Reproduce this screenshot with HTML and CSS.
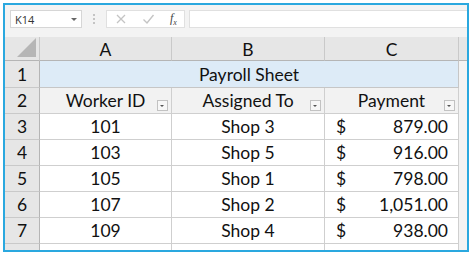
FILE: index.html
```html
<!DOCTYPE html>
<html>
<head>
<meta charset="utf-8">
<link rel="stylesheet" href="styles.css">
</head>
<body>
<div class="frame">
  <div class="fbar">
    <div class="namebox"><span>K14</span><span class="nb-arrow"></span></div>
    <div class="dots"><i></i><i></i><i></i></div>
    <div class="btns">
      <svg class="ico" width="12" height="12" viewBox="0 0 12 12"><path d="M2 2 L10 10 M10 2 L2 10" stroke="#c4c4c4" stroke-width="1.3" fill="none"/></svg>
      <svg class="ico" width="13" height="12" viewBox="0 0 13 12"><path d="M1.5 6.5 L5 10 L11.5 2" stroke="#c4c4c4" stroke-width="1.4" fill="none"/></svg>
      <span class="fx">f<sub>x</sub></span>
    </div>
    <div class="finput"></div>
  </div>
  <div class="sheet">
    <div class="corner"><span class="tri"></span></div>
    <div class="ch">A</div>
    <div class="ch">B</div>
    <div class="ch">C</div>
    <div class="ch end"></div>

    <div class="rh">1</div>
    <div class="title">Payroll Sheet</div>
    <div class="gap"></div>

    <div class="rh">2</div>
    <div class="c hdr">Worker ID<span class="flt"></span></div>
    <div class="c hdr">Assigned To<span class="flt"></span></div>
    <div class="c hdr">Payment<span class="flt"></span></div>
    <div class="gap"></div>

    <div class="rh">3</div>
    <div class="c">101</div>
    <div class="c">Shop 3</div>
    <div class="c money"><span>$</span><span>879.00</span></div>
    <div class="gap"></div>

    <div class="rh">4</div>
    <div class="c">103</div>
    <div class="c">Shop 5</div>
    <div class="c money"><span>$</span><span>916.00</span></div>
    <div class="gap"></div>

    <div class="rh">5</div>
    <div class="c">105</div>
    <div class="c">Shop 1</div>
    <div class="c money"><span>$</span><span>798.00</span></div>
    <div class="gap"></div>

    <div class="rh">6</div>
    <div class="c">107</div>
    <div class="c">Shop 2</div>
    <div class="c money"><span>$</span><span>1,051.00</span></div>
    <div class="gap"></div>

    <div class="rh">7</div>
    <div class="c">109</div>
    <div class="c">Shop 4</div>
    <div class="c money"><span>$</span><span>938.00</span></div>
    <div class="gap"></div>

    <div class="rh last"></div>
    <div class="c blank"></div>
    <div class="c blank"></div>
    <div class="c blank"></div>
    <div class="gap"></div>
  </div>
</div>
</body>
</html>
```
FILE: styles.css
```css
* { box-sizing: border-box; }
html, body { margin: 0; padding: 0; background: #ffffff; }
body { width: 474px; height: 259px; overflow: hidden; font-family: "Lato", "Open Sans", sans-serif; color: #111; }

.frame {
  margin: 3px 0 0 3px;
  width: 466px;
  height: 249px;
  border: 2px solid #2aa8df;
  background: #f3f3f3;
  display: flex;
  flex-direction: column;
  overflow: hidden;
}

.fbar {
  display: flex;
  align-items: center;
  height: 18px;
  margin-top: 5px;
  padding-left: 5px;
}
.namebox {
  width: 72px;
  height: 18px;
  background: #fff;
  border: 1px solid #d6d6d6;
  display: flex;
  align-items: center;
  justify-content: space-between;
  padding: 0 4px 0 4px;
  font-family: "Open Sans", sans-serif;
  font-size: 11px;
  color: #333;
}
.nb-arrow {
  width: 0; height: 0;
  border-left: 3px solid transparent;
  border-right: 3px solid transparent;
  border-top: 3px solid #666;
}
.dots {
  width: 24px;
  display: flex;
  flex-direction: column;
  align-items: center;
  gap: 2px;
}
.dots i { display: block; width: 2px; height: 2px; background: #c4c4c4; }
.btns {
  width: 79px;
  height: 18px;
  background: #fff;
  border: 1px solid #e0e0e0;
  display: flex;
  align-items: center;
  padding-left: 8px;
  gap: 15px;
}
.fx {
  font-family: "Liberation Serif", serif;
  font-style: italic;
  font-size: 12px;
  color: #444;
}
.fx sub { font-size: 8px; }
.finput {
  margin-left: 4px;
  flex: 1;
  height: 18px;
  background: #fff;
  border: 1px solid #e0e0e0;
  border-right: none;
}

.sheet {
  margin-top: 9px;
  display: grid;
  grid-template-columns: 35px 132px 153px 134px 1fr;
  grid-template-rows: 24px 27px 26px 26px 26px 26px 26px 26px 10px;
  font-size: 17.5px;
}
.corner {
  background: #e6e6e6;
  border-right: 1px solid #c9c9c9;
  border-bottom: 1px solid #b5b5b5;
  position: relative;
}
.tri {
  position: absolute;
  right: 3px; bottom: 3px;
  width: 0; height: 0;
  border-left: 19px solid transparent;
  border-bottom: 19px solid #b6b6b6;
}
.ch {
  background: #e6e6e6;
  border-right: 1px solid #c9c9c9;
  border-bottom: 1px solid #b5b5b5;
  display: flex;
  align-items: center;
  justify-content: center;
  padding-top: 1px;
}
.ch.end { border-right: none; }
.rh {
  background: #e6e6e6;
  border-right: 1px solid #b5b5b5;
  border-bottom: 1px solid #c9c9c9;
  display: flex;
  align-items: center;
  justify-content: center;
}
.rh.last { border-bottom: none; }
.title {
  grid-column: 2 / 5;
  background: #ddebf7;
  border-right: 1px solid #c6c6c6;
  border-bottom: 1px solid #c6c6c6;
  display: flex;
  align-items: center;
  justify-content: center;
}
.gap { background: #f3f3f3; }
.c {
  background: #fff;
  border-right: 1px solid #cfcfcf;
  border-bottom: 1px solid #cfcfcf;
  display: flex;
  align-items: center;
  justify-content: center;
  position: relative;
}
.c.hdr { background: #f2f2f2; }
.c.blank { border-bottom: none; }
.money {
  justify-content: space-between;
  padding: 0 10px 0 11px;
}
.flt {
  position: absolute;
  right: 3px;
  bottom: 2px;
  width: 11px;
  height: 11px;
  background: #f7f7f7;
  border: 1px solid #c2c2c2;
}
.flt::after {
  content: "";
  position: absolute;
  left: 2px; top: 4px;
  border-left: 2.5px solid transparent;
  border-right: 2.5px solid transparent;
  border-top: 2.5px solid #555;
}
```
